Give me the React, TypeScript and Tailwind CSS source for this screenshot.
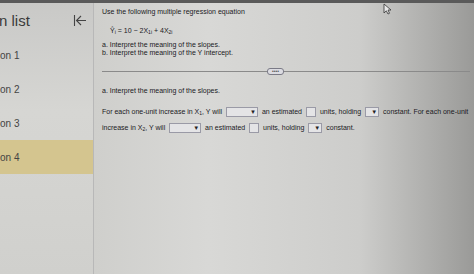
import React from 'react';

const Dropdown: React.FC<{ w: string }> = ({ w }) => (
  <span className={`inline-flex items-stretch h-[10px] ${w} border border-[#9a9aa6] bg-[#e4e4e6] align-middle mx-[2px]`}>
    <span className="flex-1" />
    <span className="w-[8px] flex items-center justify-center text-[6px] leading-none text-[#222]">▼</span>
  </span>
);

const Box: React.FC = () => (
  <span className="inline-block h-[10px] w-[10px] border border-[#9a9aa6] bg-[#e4e4e6] align-middle mx-[2px]" />
);

const App: React.FC = () => {
  const items = ['on 1', 'on 2', 'on 3', 'on 4'];
  return (
    <div
      className="relative w-[474px] h-[274px] overflow-hidden flex flex-col bg-[#cfcfcd]"
      style={{ fontFamily: '"Liberation Sans", Arial, sans-serif' }}
    >
      <div className="h-[3px] bg-[#5a5a5a]" />
      <div className="flex flex-1">
        {/* sidebar */}
        <aside className="w-[94px] border-r border-[#b8b8b8] bg-[linear-gradient(180deg,#c9c9c7,#d6d6d3_40%,#d0d0cd)] flex flex-col">
          <div className="h-[34px] flex items-center justify-between pr-[6px]">
            <span className="text-[15px] text-[#3a3a3a] leading-none ml-[-1px]">n list</span>
            <svg width="14" height="13" viewBox="0 0 14 13" className="text-[#444]">
              <path d="M1.5 1v11M13 6.5H4M8 2L3.5 6.5 8 11" stroke="currentColor" strokeWidth="1.1" fill="none" />
            </svg>
          </div>
          {items.map((t, i) => (
            <div
              key={t}
              className={`h-[34px] flex items-center text-[10px] text-[#444] ${i === 0 ? 'mt-[1px]' : ''} ${i === 3 ? 'bg-[#d4c58f]' : ''}`}
            >
              {t}
            </div>
          ))}
        </aside>

        {/* main */}
        <main className="flex-1 bg-[linear-gradient(90deg,#cfcfcc,#d8d8d6_30%,#cdcdcb_70%,#9a9a98)] pl-[8px] pr-[2px] pt-[5px] text-[7px] text-[#1a1a24] leading-[8px]">
          <p>Use the following multiple regression equation</p>
          <p className="mt-[11px] ml-[8px]">
            Ŷ<sub className="text-[5px]">i</sub> = 10 − 2X<sub className="text-[5px]">1i</sub> + 4X<sub className="text-[5px]">2i</sub>
          </p>
          <p className="mt-[6px]">a. Interpret the meaning of the slopes.</p>
          <p>b. Interpret the meaning of the Y intercept.</p>

          <div className="relative mt-[14px] h-[1px] bg-[#8a8a8a] mr-[2px]">
            <span className="absolute left-[165px] top-[-3px] w-[17px] h-[7px] rounded-[3px] border border-[#7a7a86] bg-[#dcdce2] flex items-center justify-center text-[5px] leading-none text-[#555]">
              ••••
            </span>
          </div>

          <p className="mt-[15px]">a. Interpret the meaning of the slopes.</p>
          <div className="mt-[9px] leading-[16px]">
            For each one-unit increase in X<sub className="text-[5px]">1</sub>, Y will <Dropdown w="w-[32px]" /> an estimated <Box /> units, holding <Dropdown w="w-[14px]" /> constant. For each one-unit increase in X<sub className="text-[5px]">2</sub>, Y will <Dropdown w="w-[32px]" /> an estimated <Box /> units, holding <Dropdown w="w-[14px]" /> constant.
          </div>
        </main>
      </div>

      {/* mouse pointer */}
      <svg className="absolute left-[383px] top-[3px]" width="9" height="12" viewBox="0 0 9 12">
        <path d="M1 1v9l2.3-2.2L5 11l1.5-.7L5 7h3z" fill="#e8e8e8" stroke="#333" strokeWidth="0.8" />
      </svg>
    </div>
  );
};

export default App;
